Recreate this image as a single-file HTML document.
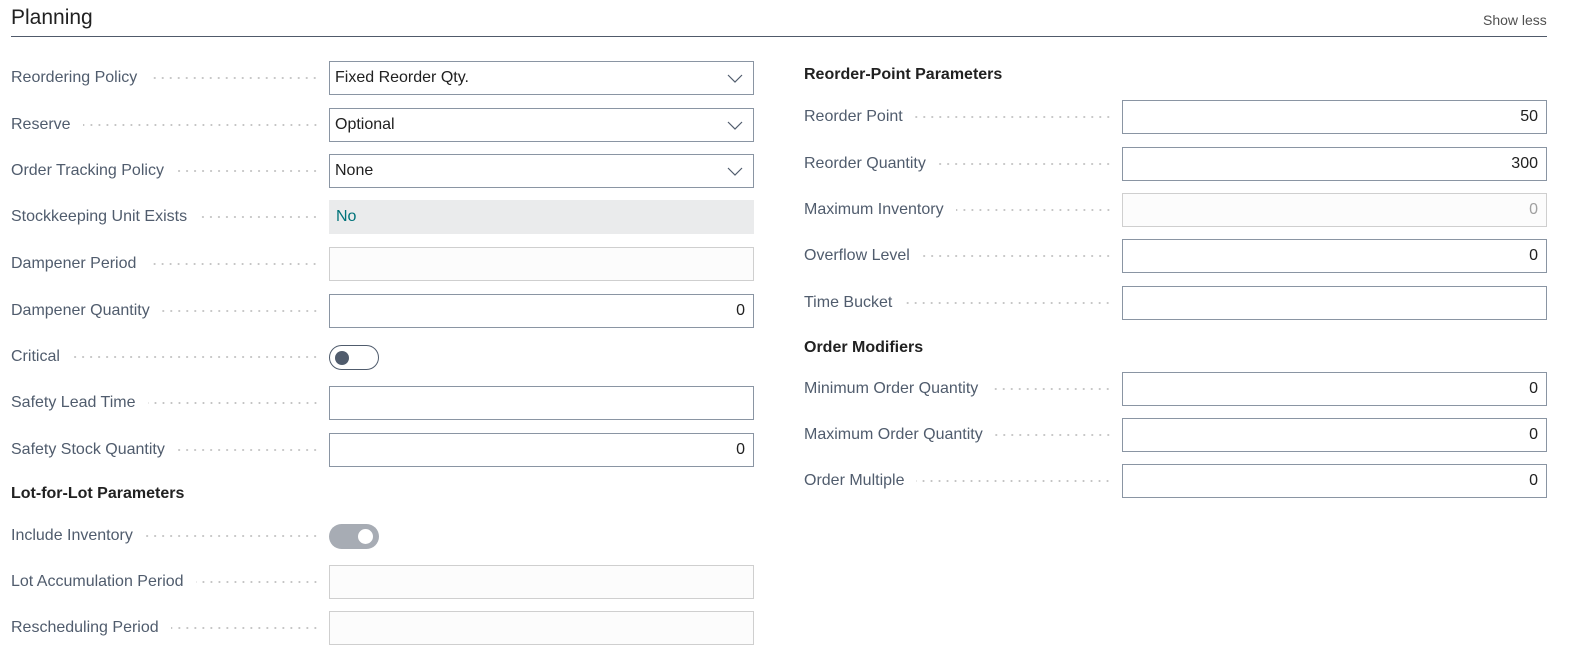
<!DOCTYPE html>
<html><head><meta charset="utf-8"><style>
*{box-sizing:border-box;margin:0;padding:0}
body{width:1581px;height:661px;background:#fff;font-family:"Liberation Sans",sans-serif;position:relative;overflow:hidden;color:#212121}
.title{position:absolute;left:11px;top:6px;font-size:21px;color:#212121}
.show{position:absolute;left:1483px;top:12px;font-size:14px;color:#505050}
.hr{position:absolute;left:11px;top:36px;width:1536px;height:1px;background:#505a6a}
.row{position:absolute;height:34px;display:flex;align-items:center;font-size:16px;color:#505c6d}
.row .l{white-space:nowrap;padding-right:12px}
.row .d{flex:1;height:2px;background-image:radial-gradient(circle,#c4c4c4 0.9px,transparent 1.2px);background-size:8px 2px;background-position:right;margin-right:10px}
.in{position:absolute;height:34px;border:1px solid #8a95a3;background:#fff;font-size:16px;color:#212121;display:flex;align-items:center;padding:0 8px 0 5px}
.in.r{justify-content:flex-end}
.in.dis{border-color:#cfcfcf;background:#fcfcfc;color:#a0a0a0}
.in.ro{border:none;background:#eaebec;color:#00737a;padding-left:7px}
.chev{position:absolute;right:10px;top:10px}
.h{position:absolute;font-size:16px;font-weight:bold;color:#212121}
.tg{position:absolute;width:50px;height:25px;border-radius:13px}
</style></head><body>
<div class="title">Planning</div>
<div class="show">Show less</div>
<div class="hr"></div>

<!-- left column -->
<div class="row" style="left:11px;top:61px;width:318px"><span class="l">Reordering Policy</span><span class="d"></span></div>
<div class="in" style="left:329px;top:61px;width:425px">Fixed Reorder Qty.<svg class="chev" width="16" height="12" viewBox="0 0 16 12"><path d="M1 3l7 7 7-7" fill="none" stroke="#505c6d" stroke-width="1.2"/></svg></div>

<div class="row" style="left:11px;top:108px;width:318px"><span class="l">Reserve</span><span class="d"></span></div>
<div class="in" style="left:329px;top:108px;width:425px">Optional<svg class="chev" width="16" height="12" viewBox="0 0 16 12"><path d="M1 3l7 7 7-7" fill="none" stroke="#505c6d" stroke-width="1.2"/></svg></div>

<div class="row" style="left:11px;top:154px;width:318px"><span class="l">Order Tracking Policy</span><span class="d"></span></div>
<div class="in" style="left:329px;top:154px;width:425px">None<svg class="chev" width="16" height="12" viewBox="0 0 16 12"><path d="M1 3l7 7 7-7" fill="none" stroke="#505c6d" stroke-width="1.2"/></svg></div>

<div class="row" style="left:11px;top:200px;width:318px"><span class="l">Stockkeeping Unit Exists</span><span class="d"></span></div>
<div class="in ro" style="left:329px;top:200px;width:425px">No</div>

<div class="row" style="left:11px;top:247px;width:318px"><span class="l">Dampener Period</span><span class="d"></span></div>
<div class="in dis" style="left:329px;top:247px;width:425px"></div>

<div class="row" style="left:11px;top:294px;width:318px"><span class="l">Dampener Quantity</span><span class="d"></span></div>
<div class="in r" style="left:329px;top:294px;width:425px">0</div>

<div class="row" style="left:11px;top:340px;width:318px"><span class="l">Critical</span><span class="d"></span></div>
<div class="tg" style="left:329px;top:345px;border:1px solid #505c6d;background:#fff"><div style="position:absolute;left:5px;top:5px;width:14px;height:14px;border-radius:50%;background:#505c6d"></div></div>

<div class="row" style="left:11px;top:386px;width:318px"><span class="l">Safety Lead Time</span><span class="d"></span></div>
<div class="in" style="left:329px;top:386px;width:425px"></div>

<div class="row" style="left:11px;top:433px;width:318px"><span class="l">Safety Stock Quantity</span><span class="d"></span></div>
<div class="in r" style="left:329px;top:433px;width:425px">0</div>

<div class="h" style="left:11px;top:485px">Lot-for-Lot Parameters</div>

<div class="row" style="left:11px;top:519px;width:318px"><span class="l">Include Inventory</span><span class="d"></span></div>
<div class="tg" style="left:329px;top:524px;background:#a7acb4"><div style="position:absolute;left:29px;top:5px;width:15px;height:15px;border-radius:50%;background:#fff"></div></div>

<div class="row" style="left:11px;top:565px;width:318px"><span class="l">Lot Accumulation Period</span><span class="d"></span></div>
<div class="in dis" style="left:329px;top:565px;width:425px"></div>

<div class="row" style="left:11px;top:611px;width:318px"><span class="l">Rescheduling Period</span><span class="d"></span></div>
<div class="in dis" style="left:329px;top:611px;width:425px"></div>

<!-- right column -->
<div class="h" style="left:804px;top:66px">Reorder-Point Parameters</div>

<div class="row" style="left:804px;top:100px;width:318px"><span class="l">Reorder Point</span><span class="d"></span></div>
<div class="in r" style="left:1122px;top:100px;width:425px">50</div>

<div class="row" style="left:804px;top:147px;width:318px"><span class="l">Reorder Quantity</span><span class="d"></span></div>
<div class="in r" style="left:1122px;top:147px;width:425px">300</div>

<div class="row" style="left:804px;top:193px;width:318px"><span class="l">Maximum Inventory</span><span class="d"></span></div>
<div class="in r dis" style="left:1122px;top:193px;width:425px">0</div>

<div class="row" style="left:804px;top:239px;width:318px"><span class="l">Overflow Level</span><span class="d"></span></div>
<div class="in r" style="left:1122px;top:239px;width:425px">0</div>

<div class="row" style="left:804px;top:286px;width:318px"><span class="l">Time Bucket</span><span class="d"></span></div>
<div class="in" style="left:1122px;top:286px;width:425px"></div>

<div class="h" style="left:804px;top:339px">Order Modifiers</div>

<div class="row" style="left:804px;top:372px;width:318px"><span class="l">Minimum Order Quantity</span><span class="d"></span></div>
<div class="in r" style="left:1122px;top:372px;width:425px">0</div>

<div class="row" style="left:804px;top:418px;width:318px"><span class="l">Maximum Order Quantity</span><span class="d"></span></div>
<div class="in r" style="left:1122px;top:418px;width:425px">0</div>

<div class="row" style="left:804px;top:464px;width:318px"><span class="l">Order Multiple</span><span class="d"></span></div>
<div class="in r" style="left:1122px;top:464px;width:425px">0</div>
</body></html>
